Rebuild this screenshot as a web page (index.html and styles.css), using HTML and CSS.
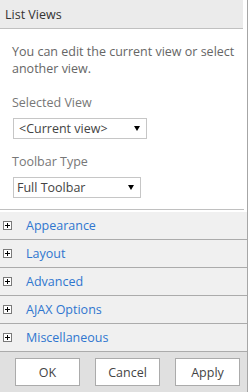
FILE: index.html
```html
<!DOCTYPE html>
<html>
<head>
<meta charset="utf-8">
<link rel="stylesheet" href="styles.css">
</head>
<body>
<div class="panel">
  <div class="header">List Views</div>
  <div class="content">
    <p class="desc">You can edit the current view or select another view.</p>
    <div class="label">Selected View</div>
    <div class="select sel1"><span>&lt;Current view&gt;</span><i class="arrow"></i></div>
    <div class="label label2">Toolbar Type</div>
    <div class="select sel2"><span class="dark">Full Toolbar</span><i class="arrow"></i></div>
  </div>
  <div class="sep"></div>
  <div class="sections">
    <div class="row"><svg class="plus" width="9" height="9" viewBox="0 0 9 9"><rect x="0.5" y="0.5" width="8" height="8" fill="#fff" stroke="#7a7a7a"/><path d="M2 4.5H7M4.5 2V7" stroke="#000" stroke-width="1"/></svg><span class="title">Appearance</span></div>
    <div class="row"><svg class="plus" width="9" height="9" viewBox="0 0 9 9"><rect x="0.5" y="0.5" width="8" height="8" fill="#fff" stroke="#7a7a7a"/><path d="M2 4.5H7M4.5 2V7" stroke="#000" stroke-width="1"/></svg><span class="title">Layout</span></div>
    <div class="row"><svg class="plus" width="9" height="9" viewBox="0 0 9 9"><rect x="0.5" y="0.5" width="8" height="8" fill="#fff" stroke="#7a7a7a"/><path d="M2 4.5H7M4.5 2V7" stroke="#000" stroke-width="1"/></svg><span class="title">Advanced</span></div>
    <div class="row"><svg class="plus" width="9" height="9" viewBox="0 0 9 9"><rect x="0.5" y="0.5" width="8" height="8" fill="#fff" stroke="#7a7a7a"/><path d="M2 4.5H7M4.5 2V7" stroke="#000" stroke-width="1"/></svg><span class="title">AJAX Options</span></div>
    <div class="row"><svg class="plus" width="9" height="9" viewBox="0 0 9 9"><rect x="0.5" y="0.5" width="8" height="8" fill="#fff" stroke="#7a7a7a"/><path d="M2 4.5H7M4.5 2V7" stroke="#000" stroke-width="1"/></svg><span class="title">Miscellaneous</span></div>
  </div>
  <div class="footer">
    <button class="btn">OK</button>
    <button class="btn">Cancel</button>
    <button class="btn">Apply</button>
  </div>
</div>
</body>
</html>
```

FILE: styles.css
```css
html, body {
  margin: 0;
  padding: 0;
  background: #fff;
}
body {
  font-family: "Open Sans", "Noto Sans", sans-serif;
  font-size: 12.5px;
}
.panel {
  width: 247px;
  height: 392px;
  border-right: 1px solid #a6a6a6;
  display: flex;
  flex-direction: column;
}
.header {
  width: 238px;
  height: 28px;
  line-height: 30px;
  padding-left: 5px;
  background: #ebebeb;
  border-bottom: 1px solid #c0c0c0;
  color: #333;
  font-size: 12.5px;
}
.content {
  padding: 0 0 0 12px;
  height: 180px;
}
.desc {
  margin: 0;
  padding-top: 14px;
  color: #666;
  line-height: 17px;
  width: 234px;
}
.label {
  color: #777;
  margin-top: 17px;
  line-height: 17px;
}
.label2 {
  margin-top: 14px;
}
.select {
  margin-top: 7px;
  margin-left: 1px;
  height: 19px;
  border: 1px solid #c6c6c6;
  display: flex;
  align-items: center;
  justify-content: space-between;
  padding: 0 6px 0 5px;
  box-sizing: content-box;
  color: #444;
}
.sel1 { width: 121px; }
.sel2 { width: 117px; padding-left: 3px; }
.dark { color: #444; }
.arrow {
  width: 0;
  height: 0;
  border-left: 3px solid transparent;
  border-right: 3px solid transparent;
  border-top: 5px solid #000;
}
.sep {
  width: 244px;
  height: 1px;
  background: #c0c0c0;
  margin-bottom: 2px;
}
.sections {
  background: #f0f0f0;
}
.row {
  height: 27px;
  border-bottom: 1px solid #ababab;
  display: flex;
  align-items: center;
}
.plus {
  margin-left: 3px;
  display: block;
}
.title {
  margin-left: 14px;
  color: #2f76cf;
}
.footer {
  flex: 1;
  background: #e0e0e0;
  display: flex;
  gap: 15px;
  padding: 6px 0 0 15px;
}
.btn {
  width: 65px;
  height: 28px;
  background: #fff;
  border: 1px solid #ababab;
  font-family: inherit;
  font-size: 12.5px;
  color: #444;
  padding: 0;
}
```
